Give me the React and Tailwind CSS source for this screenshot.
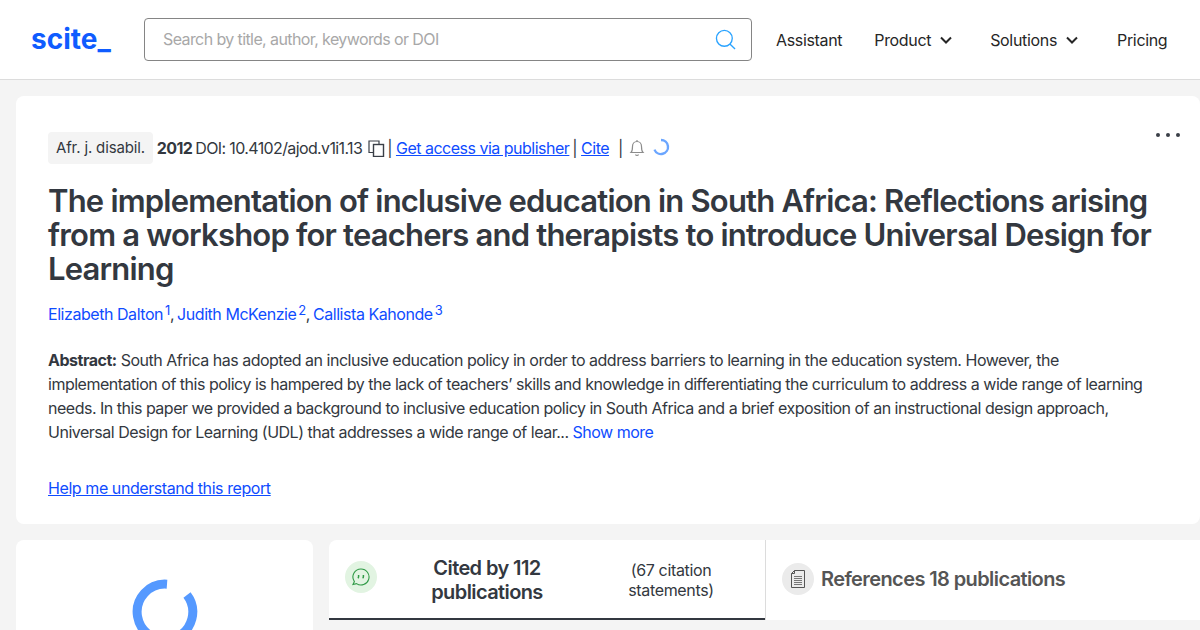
import React from "react";

function Chevron() {
  return (
    <svg width="14" height="10" viewBox="0 0 14 10" fill="none" stroke="#262626" strokeWidth="2" className="block">
      <path d="M2 2.5 L7 7.5 L12 2.5" />
    </svg>
  );
}

export default function App() {
  return (
    <div className="w-[1200px] h-[630px] overflow-hidden bg-[#f4f4f4] text-[#333840] font-['Inter','Liberation_Sans',sans-serif]">
      <header className="h-20 bg-white border-b border-[#dcdcdc] flex items-center">
        <div className="w-36 pl-[31px] text-[28px] leading-none font-bold text-[#0f5cff] tracking-[0px] -mt-0.5">scite_</div>
        <div className="w-[608px] h-[43px] rounded border border-[#858585] flex items-center justify-between pl-[18px] pr-[15px] pb-0.5">
          <span className="text-base tracking-[-0.6px] text-[#a8a8a8]">Search by title, author, keywords or DOI</span>
          <svg width="21" height="21" viewBox="0 0 22 22" fill="none" stroke="#2aa3ff" strokeWidth="1.4" className="mt-0.5">
            <circle cx="9.8" cy="9.8" r="8.3" />
            <path d="M15.6 15.8 L21 21" />
          </svg>
        </div>
        <nav className="flex items-center text-base tracking-[-0.33px] text-[#262626]">
          <span className="ml-6">Assistant</span>
          <span className="ml-8">Product</span>
          <span className="ml-2"><Chevron /></span>
          <span className="ml-[37px]">Solutions</span>
          <span className="ml-2"><Chevron /></span>
          <span className="ml-[38px]">Pricing</span>
        </nav>
      </header>

      <main className="pl-4 pt-4 flex flex-col gap-4">
        <section className="relative h-[428px] bg-white rounded-lg pl-8 pr-[42px] pt-9">
          <div className="absolute top-[37px] right-5 flex gap-1.5">
            <span className="w-1 h-1 rounded-full bg-[#3a3f47]" />
            <span className="w-1 h-1 rounded-full bg-[#3a3f47]" />
            <span className="w-1 h-1 rounded-full bg-[#3a3f47]" />
          </div>
          <div className="flex items-center h-8 text-base tracking-[-0.62px] whitespace-nowrap">
            <span className="h-8 px-2 pt-px mr-[3px] flex items-center bg-[#f4f4f4] rounded text-[15px] tracking-[-0.15px]">Afr. j. disabil.</span>
            <b className="font-bold ml-px">2012</b>
            <span className="ml-[3px]">DOI: 10.4102/ajod.v1i1.13</span>
            <svg width="17" height="17" viewBox="0 0 17 17" fill="none" stroke="#3a3f47" strokeWidth="1.2" className="ml-1.5 mr-[2px]">
              <path d="M5 12.5 H1 V1 H11 V4" />
              <rect x="5.5" y="4.5" width="10" height="12" strokeWidth="1.4" />
            </svg>
            <span>|</span>
            <a className="ml-1 text-[#0f4cff] underline tracking-[-0.5px]">Get access via publisher</a>
            <span className="ml-[3px]">|</span>
            <a className="ml-1 text-[#0f4cff] underline tracking-[-0.5px]">Cite</a>
            <span className="ml-[9px]">|</span>
            <svg width="16" height="18" viewBox="0 0 16 18" fill="none" stroke="#8c8c8c" strokeWidth="1.2" className="ml-1.5">
              <path d="M2 13.5 C3.5 12 3.5 10 3.5 7.5 C3.5 4.5 5.5 2.5 8 2.5 C10.5 2.5 12.5 4.5 12.5 7.5 C12.5 10 12.5 12 14 13.5 Z" />
              <path d="M8 1 V2.5 M6.5 15.5 C7 16.8 9 16.8 9.5 15.5" />
            </svg>
            <svg width="18" height="18" viewBox="0 0 18 18" fill="none" stroke="#6ba6ff" strokeWidth="2.4" className="ml-[7px] -mt-[3px]">
              <path d="M9 2 A7 7 0 1 1 2.5 11.6" />
            </svg>
          </div>
          <h1 className="mt-[20px] text-[31px] leading-[34px] font-semibold tracking-[-0.8px] text-[#333840]">
            The implementation of inclusive education in South Africa: Reflections arising from a workshop for teachers and therapists to introduce Universal Design for Learning
          </h1>
          <div className="mt-[14px] h-7 flex items-center text-base tracking-[-0.45px] text-[#0f4cff]">
            <span>Elizabeth Dalton</span><sup className="text-[13px] ml-0.5 top-0 -translate-y-1">1</sup>
            <span className="text-[#333840]">,</span>
            <span className="ml-[3px]">Judith McKenzie</span><sup className="text-[13px] ml-0.5 top-0 -translate-y-1">2</sup>
            <span className="text-[#333840]">,</span>
            <span className="ml-[3px]">Callista Kahonde</span><sup className="text-[13px] ml-0.5 top-0 -translate-y-1">3</sup>
          </div>
          <p className="mt-5 text-base leading-6 tracking-[-0.49px] text-[#333840]">
            <b className="font-bold">Abstract:</b> South Africa has adopted an inclusive education policy in order to address barriers to learning in the education system. However, the<br />
            implementation of this policy is hampered by the lack of teachers’ skills and knowledge in differentiating the curriculum to address a wide range of learning<br />
            needs. In this paper we provided a background to inclusive education policy in South Africa and a brief exposition of an instructional design approach,<br />
            Universal Design for Learning (UDL) that addresses a wide range of lear... <span className="text-[#0f4cff]">Show more</span>
          </p>
          <a className="block mt-8 text-base leading-6 tracking-[-0.42px] text-[#0f4cff] underline">Help me understand this report</a>
        </section>

        <div className="flex gap-4">
          <div className="w-[297px] h-[200px] shrink-0 bg-white rounded-lg flex justify-center pt-[39px]">
            <svg width="66" height="66" viewBox="0 0 66 66" fill="none" stroke="#5599ff" strokeWidth="9">
              <path d="M55 16 A27.8 27.8 0 1 1 35 5.2" />
            </svg>
          </div>
          <div className="flex-1 h-20 flex rounded-tl-lg bg-white">
            <div className="w-[436px] h-20 border-b-2 border-[#333840] flex items-center pl-4 rounded-tl-lg">
              <span className="w-8 h-8 rounded-full bg-[#e2f4e2] flex items-center justify-center shrink-0 -mt-1">
                <svg width="20" height="20" viewBox="0 0 20 20" fill="none" stroke="#2f9a46" strokeWidth="1.1">
                  <path d="M10 2 A8 8 0 1 1 5.5 16.6 L2 17.5 L3.4 14.6 A8 8 0 0 1 10 2 Z" />
                  <path d="M7.6 8 V9.6 Q7.6 10.8 6.8 11.2 M12.4 8 V9.6 Q12.4 10.8 11.6 11.2" strokeWidth="1.5" />
                </svg>
              </span>
              <div className="w-[220px] text-center text-xl leading-6 font-semibold tracking-[-0.6px] text-[#333840] mt-0.5">Cited by 112 publications</div>
              <div className="w-[112px] ml-[18px] text-center text-base leading-5 tracking-[-0.35px] text-[#333840] mt-0.5">(67 citation statements)</div>
            </div>
            <div className="flex-1 h-20 border-l border-[#dcdcdc] flex items-center pl-4">
              <span className="w-8 h-8 rounded-full bg-[#ebebeb] flex items-center justify-center shrink-0 -mt-0.5">
                <svg width="18" height="20" viewBox="0 0 18 20" fill="none" stroke="#555" strokeWidth="1">
                  <path d="M5.5 1.5 H15.5 V18.5 H2.5 V4.5 Z M5.5 1.5 V4.5 H2.5" />
                  <path d="M5 7.5 H13 M5 9.5 H13 M5 11.5 H13 M5 13.5 H13 M5 15.5 H13" stroke="#777" />
                </svg>
              </span>
              <span className="ml-[7px] text-xl font-semibold tracking-[-0.6px] text-[#555] -mt-0.5">References 18 publications</span>
            </div>
          </div>
        </div>
      </main>
    </div>
  );
}
